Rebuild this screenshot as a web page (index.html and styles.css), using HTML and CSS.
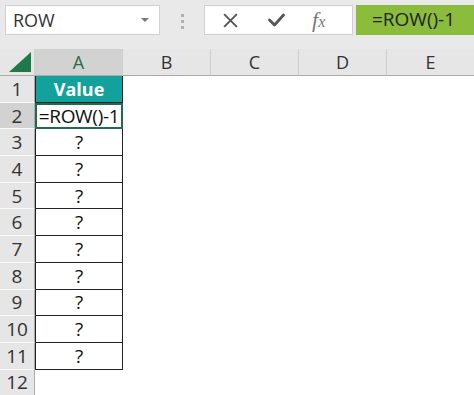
FILE: index.html
```
<!DOCTYPE html>
<html lang="en">
<head>
    <meta charset="UTF-8">
    <title>ROW formula</title>
    <link rel="stylesheet" href="styles.css">
</head>
<body>

    <div class="toolbar">
        <div class="name-box">
            <span>ROW</span>
            <svg class="caret" width="8" height="5" viewBox="0 0 8 5"><path d="M0 0 L8 0 L4 4 Z" fill="#777"/></svg>
        </div>
        <div class="grip"><i></i><i></i><i></i></div>
        <div class="fx-box">
            <svg width="17" height="17" viewBox="0 0 16 16"><path d="M2 2 L14 14 M14 2 L2 14" stroke="#555" stroke-width="1.8"/></svg>
            <svg width="19" height="16" viewBox="0 0 18 16"><path d="M2 8 L7 13 L16 3" stroke="#555" stroke-width="2.8" fill="none" stroke-linecap="round" stroke-linejoin="round"/></svg>
            <span class="fx"><i>f</i><i>x</i></span>
        </div>
        <div class="formula">=ROW()-1</div>
    </div>

    <div class="sheet" id="sheet">
        <div class="corner"><svg width="22" height="20" viewBox="0 0 22 20"><path d="M22 0 L22 20 L0 20 Z" fill="#1f7a4a"/></svg></div>
        <div class="col-head selected">A</div>
        <div class="col-head">B</div>
        <div class="col-head">C</div>
        <div class="col-head">D</div>
        <div class="col-head last">E</div>
    </div>

    <script>
        // rows of the sheet: only column A holds data
        const values = ["Value", "=ROW()-1", "?", "?", "?", "?", "?", "?", "?", "?", "?", ""];
        const sheet = document.getElementById("sheet");

        values.forEach((value, i) => {
            const row = i + 1;
            let html = `<div class="row-head${row === 2 ? ' selected' : ''}">${row}</div>`;
            let cls = "cell";
            if (row === 1) cls += " title";
            else if (row === 2) cls += " active";
            if (row <= 11) cls += " boxed";
            html += `<div class="${cls}">${value}</div>`;
            html += '<div class="cell"></div><div class="cell"></div><div class="cell"></div><div class="cell"></div>';
            sheet.insertAdjacentHTML("beforeend", html);
        });
    </script>

</body>
</html>
```

FILE: styles.css
```
/* General Styles */
body {
    margin: 0;
    font-family: "Open Sans", "Noto Sans", sans-serif;
    background-color: #fff;
    width: 474px;
    height: 395px;
    overflow: hidden;
}

.toolbar {
    background-color: #e9e9e9;
    height: 49px;
    display: flex;
    padding: 5px 0 0 5px;
    box-sizing: border-box;
}

.name-box {
    width: 155px;
    height: 30px;
    background-color: #fff;
    border: 1px solid #d0d0d0;
    box-sizing: border-box;
    display: flex;
    align-items: center;
    justify-content: space-between;
    padding: 0 10px 0 7px;
    font-size: 18px;
    color: #333;
}

.grip {
    width: 44px;
    display: flex;
    flex-direction: column;
    align-items: center;
    gap: 3px;
    padding-top: 9px;
}

.grip i {
    width: 3px;
    height: 3px;
    background-color: #b0b0b0;
}

.fx-box {
    width: 149px;
    height: 30px;
    background-color: #fff;
    border: 1px solid #d0d0d0;
    box-sizing: border-box;
    display: flex;
    align-items: center;
    padding-left: 17px;
    gap: 28px;
}

.fx {
    font-family: "Liberation Serif", serif;
    font-size: 22px;
    color: #777;
    margin-left: -2px;
}

.fx i:last-child {
    font-size: 16px;
}

.formula {
    margin-left: 3px;
    flex: 1;
    height: 30px;
    background-color: #8cbc3c;
    font-size: 19px;
    color: #222;
    padding-left: 16px;
    line-height: 29px;
}

.sheet {
    display: grid;
    grid-template-columns: 35px 88px 88px 88px 88px 1fr;
    grid-template-rows: 27px repeat(12, 26.7px);
}

.corner,
.col-head,
.row-head {
    background-color: #e6e6e6;
    color: #333;
    font-size: 18px;
    display: flex;
    align-items: center;
    justify-content: center;
}

.corner {
    justify-content: flex-end;
    align-items: flex-end;
    padding: 0 3px 3px 0;
    border-bottom: 1px solid #ababab;
    border-right: 1px solid #d0d0d0;
}

.col-head {
    border-bottom: 1px solid #ababab;
    border-right: 1px solid #cfcfcf;
}

.col-head.selected {
    background-color: #d2d2d2;
    color: #2a6a4c;
}

.col-head.last {
    border-right: none;
}

.row-head {
    border-bottom: 1px solid #fafafa;
    border-right: 1px solid #ababab;
    font-size: 19px;
}

.row-head.selected {
    background-color: #d2d2d2;
}

.cell {
    display: flex;
    align-items: center;
    justify-content: center;
    font-size: 19px;
    color: #111;
}

.cell.boxed {
    border-left: 1px solid #222;
    border-right: 1px solid #222;
    border-bottom: 1px solid #222;
}

.cell.title {
    background-color: #12a19b;
    color: #fff;
    font-weight: bold;
    font-size: 18px;
}

.cell.active {
    border: 2px solid #1f6b4f;
    position: relative;
    white-space: nowrap;
    letter-spacing: -0.3px;
}
```
